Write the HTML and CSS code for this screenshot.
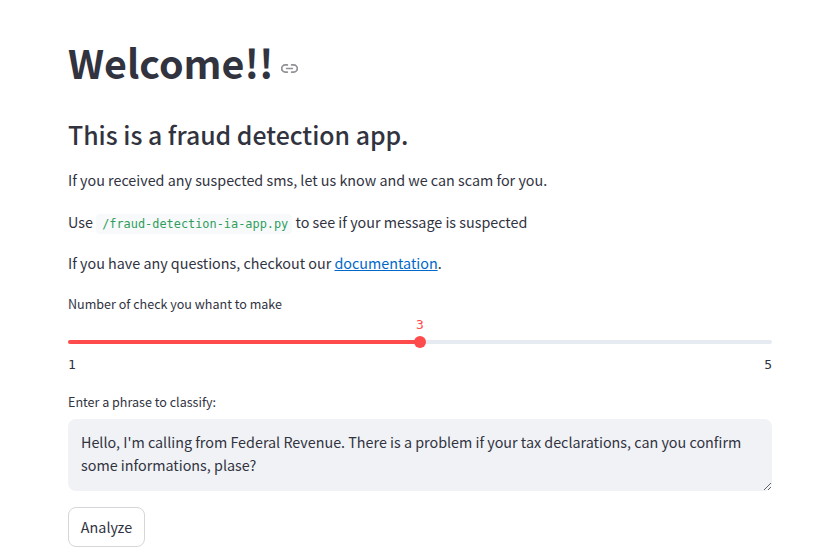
FILE: index.html
```html
<!DOCTYPE html>
<html>
<head>
  <title>Fraud detection</title>
  <link rel="stylesheet" href="styles.css">
</head>
<body>
  <div class="main">
    <h1>Welcome!!
      <a class="anchor" href="#">
        <svg width="17" height="17" viewBox="0 0 24 24" fill="none" stroke="#8f9197" stroke-width="2.4" stroke-linecap="round" stroke-linejoin="round">
          <path d="M15 7h3a5 5 0 0 1 0 10h-3"></path>
          <path d="M9 17H6A5 5 0 0 1 6 7h3"></path>
          <path d="M8 12h8"></path>
        </svg>
      </a>
    </h1>
    <h2>This is a fraud detection app.</h2>
    <p>If you received any suspected sms, let us know and we can scam for you.</p>
    <p>Use <code>/fraud-detection-ia-app.py</code> to see if your message is suspected</p>
    <p>If you have any questions, checkout our <a href="#">documentation</a>.</p>

    <div class="slider">
      <label>Number of check you whant to make</label>
      <div class="slider-value">3</div>
      <div class="track">
        <div class="track-fill"></div>
        <div class="thumb"></div>
      </div>
      <div class="ticks">
        <span>1</span>
        <span>5</span>
      </div>
    </div>

    <div class="field">
      <label for="phrase">Enter a phrase to classify:</label>
      <textarea id="phrase">Hello, I'm calling from Federal Revenue. There is a problem if your tax declarations, can you confirm some informations, plase?</textarea>
    </div>

    <button>Analyze</button>
  </div>
</body>
</html>
```

FILE: styles.css
```css
* {
  margin: 0;
  padding: 0;
  box-sizing: border-box;
}

body {
  font-family: "Noto Sans CJK SC", "Noto Sans", sans-serif;
  color: #31333f;
  background-color: white;
  font-size: 14.33px;
  overflow: hidden;
}

.main {
  padding: 34px 58px 0 68px;
  display: flex;
  flex-direction: column;
}

h1 {
  font-size: 39.4px;
  font-weight: 700;
  line-height: 56px;
  margin-bottom: 26px;
  display: flex;
  align-items: center;
  gap: 7px;
}

.anchor {
  display: flex;
  margin-top: 12px;
}

h2 {
  font-size: 24.85px;
  font-weight: 500;
  line-height: 36px;
  margin-bottom: 15px;
}

p {
  line-height: 26px;
  margin-bottom: 15.5px;
}

code {
  font-family: "DejaVu Sans Mono", monospace;
  font-size: 11.9px;
  line-height: 1;
  color: #2f9e5c;
  background-color: #f8f9fb;
  padding: 3px 4px 3px 6px;
  border-radius: 4px;
}

a {
  color: #0068c9;
}

label {
  display: block;
  font-size: 12.55px;
  line-height: 20px;
}

.slider {
  margin-top: 2px;
}

.slider-value {
  font-family: "DejaVu Sans Mono", monospace;
  font-size: 13px;
  color: #ff4b4b;
  text-align: center;
  line-height: 16px;
  margin-top: 3px;
}

.track {
  position: relative;
  height: 4px;
  margin-top: 7px;
  border-radius: 2px;
  background-color: #e6eaf1;
}

.track-fill {
  width: 50%;
  height: 100%;
  border-radius: 2px;
  background-color: #ff4b4b;
}

.thumb {
  position: absolute;
  left: 50%;
  top: -4px;
  width: 12px;
  height: 12px;
  margin-left: -6px;
  border-radius: 50%;
  background-color: #ff4b4b;
}

.ticks {
  display: flex;
  justify-content: space-between;
  font-family: "DejaVu Sans Mono", monospace;
  font-size: 13px;
  line-height: 16px;
  margin-top: 13px;
}

.field {
  margin-top: 19px;
}

textarea {
  display: block;
  width: 100%;
  height: 72px;
  margin-top: 7px;
  padding: 11px 13px;
  border: none;
  border-radius: 8px;
  outline: none;
  background-color: #f0f2f6;
  color: #31333f;
  font-family: inherit;
  font-size: 14.33px;
  line-height: 23px;
}

button {
  align-self: flex-start;
  margin-top: 16px;
  width: 77px;
  height: 40px;
  background-color: white;
  color: #31333f;
  border: 1px solid #d5d6da;
  border-radius: 8px;
  font-family: inherit;
  font-size: 14.33px;
}
```
